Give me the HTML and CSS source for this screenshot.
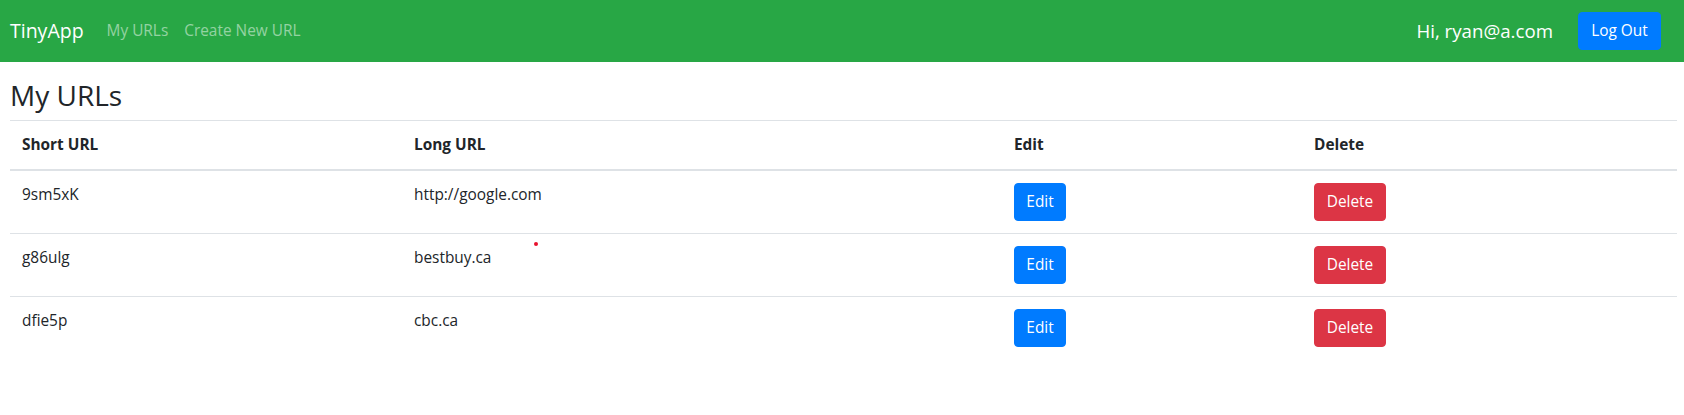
FILE: index.html
```html
<!DOCTYPE html>
<html lang="en">
<head>
<meta charset="utf-8">
<title>TinyApp</title>
<link rel="stylesheet" href="styles.css">
</head>
<body>
<nav class="navbar">
  <a class="brand" href="#">TinyApp</a>
  <div class="nav-links">
    <a class="nav-link" href="#">My URLs</a>
    <a class="nav-link" href="#">Create New URL</a>
  </div>
  <div class="nav-right">
    <span class="greeting">Hi, ryan@a.com</span>
    <button class="btn btn-primary btn-logout">Log Out</button>
  </div>
</nav>
<main class="main">
  <h3 class="title">My URLs</h3>
  <table class="table">
    <colgroup>
      <col class="c1"><col class="c2"><col class="c3"><col class="c4">
    </colgroup>
    <thead>
      <tr><th>Short URL</th><th>Long URL</th><th>Edit</th><th>Delete</th></tr>
    </thead>
    <tbody>
      <tr><td>9sm5xK</td><td>http://google.com</td><td><button class="btn btn-primary btn-edit">Edit</button></td><td><button class="btn btn-danger btn-del">Delete</button></td></tr>
      <tr><td>g86ulg</td><td>bestbuy.ca</td><td><button class="btn btn-primary btn-edit">Edit</button></td><td><button class="btn btn-danger btn-del">Delete</button></td></tr>
      <tr><td>dfie5p</td><td>cbc.ca</td><td><button class="btn btn-primary btn-edit">Edit</button></td><td><button class="btn btn-danger btn-del">Delete</button></td></tr>
    </tbody>
  </table>
</main>
<span class="dot"></span>
</body>
</html>
```
FILE: styles.css
```css
* { box-sizing: border-box; }
html, body { margin: 0; padding: 0; }
body {
  font-family: "Open Sans", "Noto Sans", sans-serif;
  font-size: 15.4px;
  line-height: 24px;
  color: #212529;
  background: #fff;
  position: relative;
  min-height: 415px;
}
a { text-decoration: none; }

.navbar {
  display: flex;
  align-items: center;
  height: 62px;
  padding: 0 23px 0 10px;
  background: #28a745;
}
.brand {
  color: #fff;
  font-size: 19.5px;
  line-height: 30px;
  margin-right: 15px;
}
.nav-links { display: flex; }
.nav-link {
  color: rgba(255, 255, 255, 0.5);
  font-size: 15.4px;
  line-height: 24px;
  padding: 0 8px;
}
.nav-right {
  margin-left: auto;
  display: flex;
  align-items: center;
  gap: 25px;
}
.greeting {
  color: #fff;
  font-size: 18.7px;
  line-height: 28px;
}

.btn {
  font-family: inherit;
  font-size: 15.4px;
  line-height: 24px;
  height: 38px;
  padding: 0;
  border: 1px solid transparent;
  border-radius: 4px;
  color: #fff;
  text-align: center;
  display: inline-block;
  vertical-align: top;
}
.btn-primary { background: #007bff; border-color: #007bff; }
.btn-danger { background: #dc3545; border-color: #dc3545; }
.btn-logout { width: 83px; }
.btn-edit { width: 52px; }
.btn-del { width: 72px; }

.main { padding: 0 7px 0 10px; }
.title {
  margin: 16px 0 8px;
  font-size: 28px;
  font-weight: 500;
  line-height: 34px;
}
.table {
  width: 1667px;
  border-collapse: collapse;
  table-layout: fixed;
}
.c1 { width: 392px; }
.c2 { width: 600px; }
.c3 { width: 300px; }
.c4 { width: 375px; }
.table th, .table td {
  padding: 12px;
  text-align: left;
  vertical-align: top;
}
.table th {
  font-weight: 700;
  border-top: 1px solid #dee2e6;
  border-bottom: 2px solid #dee2e6;
}
.table tbody tr + tr td { border-top: 1px solid #dee2e6; }

.dot {
  position: absolute;
  left: 534px;
  top: 242px;
  width: 4px;
  height: 4px;
  border-radius: 50%;
  background: #e8112d;
}
```
